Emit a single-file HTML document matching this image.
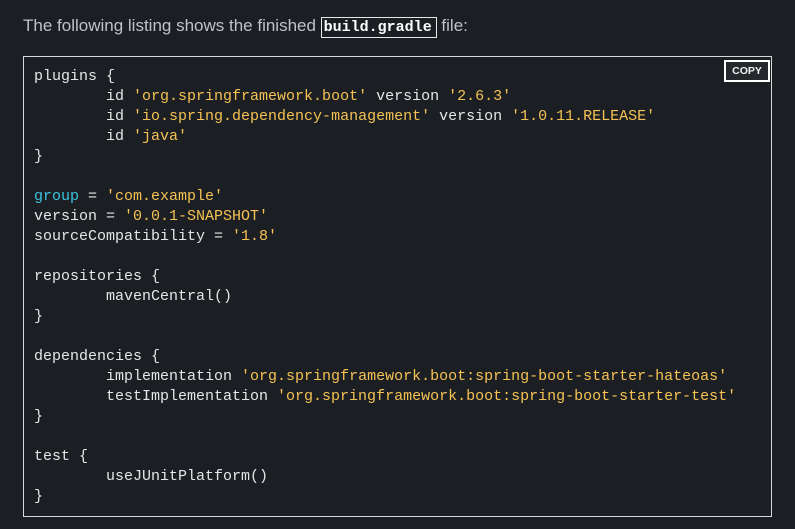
<!DOCTYPE html>
<html><head><style>
body{margin:0;width:795px;height:529px;background:#1b1f23;overflow:hidden;font-family:"Liberation Sans",sans-serif}
p{position:absolute;left:23px;top:13px;margin:0;color:#bfc3c7;font-size:17px;line-height:26px}
code{font-family:"Liberation Mono",monospace;color:#fff;border:1px solid #e8e8e8;padding:1px 4px 1px 2px;font-size:15px;font-weight:bold}
.box{position:absolute;left:23px;top:56px;width:749px;height:461px;border:1px solid #d8d8d8;box-sizing:border-box}
pre{position:absolute;left:10px;top:10px;margin:0;font-family:"Liberation Mono",monospace;font-size:15px;line-height:20px;color:#e6e6e6}
.s{color:#f5c253}.k{color:#3cc3e0}
.copy{position:absolute;left:700px;top:3px;width:46px;height:22px;border:2px solid #fff;box-sizing:border-box;color:#f0f0f0;font-size:10.5px;font-weight:bold;text-align:center;line-height:18px;background:#25282c}
</style></head><body>
<p>The following listing shows the finished <code>build.gradle</code> file:</p>
<div class="box"><div class="copy">COPY</div>
<pre>plugins {
        id <span class="s">'org.springframework.boot'</span> version <span class="s">'2.6.3'</span>
        id <span class="s">'io.spring.dependency-management'</span> version <span class="s">'1.0.11.RELEASE'</span>
        id <span class="s">'java'</span>
}

<span class="k">group</span> = <span class="s">'com.example'</span>
version = <span class="s">'0.0.1-SNAPSHOT'</span>
sourceCompatibility = <span class="s">'1.8'</span>

repositories {
        mavenCentral()
}

dependencies {
        implementation <span class="s">'org.springframework.boot:spring-boot-starter-hateoas'</span>
        testImplementation <span class="s">'org.springframework.boot:spring-boot-starter-test'</span>
}

test {
        useJUnitPlatform()
}</pre></div>
</body></html>
